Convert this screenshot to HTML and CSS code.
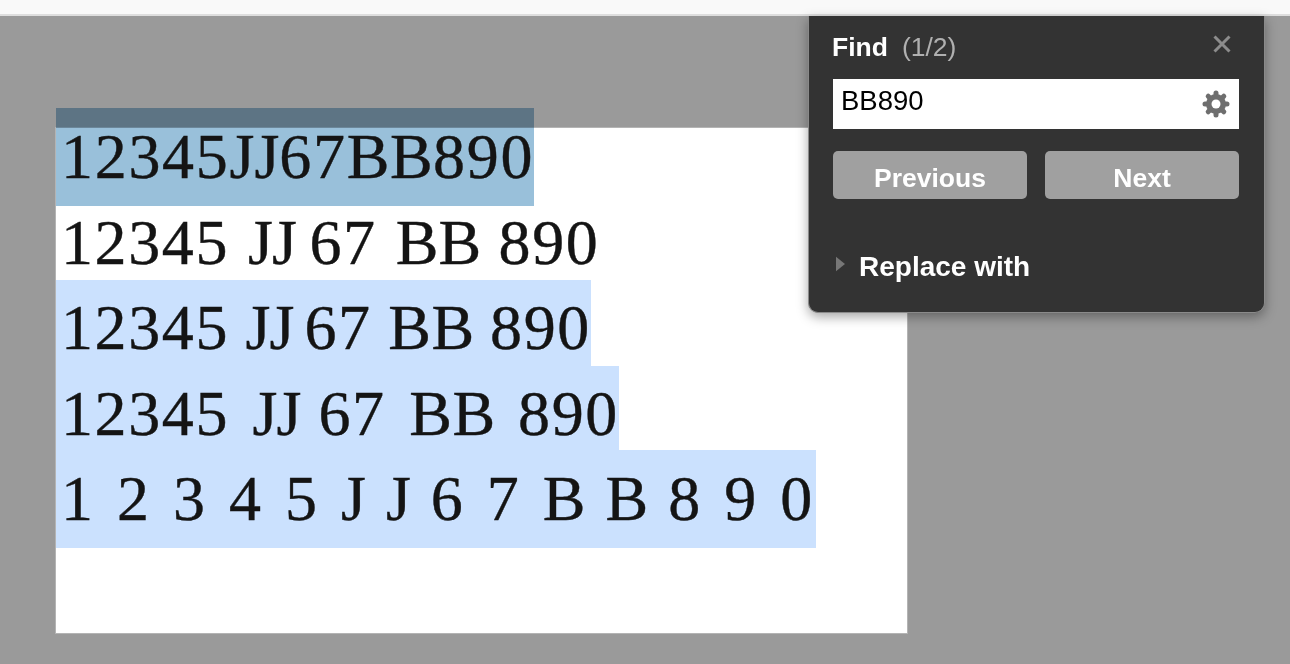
FILE: index.html
```html
<!DOCTYPE html>
<html>
<head>
	<meta charset="utf-8">
	<title>Find</title>
	<link rel="stylesheet" href="styles.css">
</head>
<body>
<div class="top_bar"></div>
<div class="viewer">
	<div class="page">
		<div class="line line_current"><span class="nums">12345</span><span class="jay">JJ</span><span class="nums">67</span><span class="bee">BB</span><span class="nums">890</span></div>
		<div class="line line_plain"><span class="nums">12345 </span><span class="jay">JJ </span><span class="nums">67 </span><span class="bee">BB </span><span class="nums">890</span></div>
		<div class="line line_three found"><span class="nums">12345 </span><span class="jay">JJ </span><span class="nums">67 </span><span class="bee">BB </span><span class="nums">890</span></div>
		<div class="line line_four found"><span class="nums">12345 </span><span class="jay">JJ </span><span class="nums">67 </span><span class="bee">BB </span><span class="nums">890</span></div>
		<div class="line line_five found"><span class="nums">12345</span><span class="jay">JJ</span><span class="nums">67</span><span class="bee">BB</span><span class="nums">890</span></div>
	</div>

	<div class="find_panel">
		<div class="find_header">
			<span class="find_title">Find</span>
			<span class="find_count">(1/2)</span>
			<svg class="close_icon" viewBox="0 0 18 18" aria-hidden="true"><path d="M1.5 1.5l15 15M16.5 1.5l-15 15"/></svg>
		</div>
		<div class="find_input">
			<span>BB890</span>
			<svg class="gear_icon" viewBox="0 0 28 28" aria-hidden="true">
				<g class="gear_teeth">
					<path d="M14 3v22M3 14h22M6.2 6.2l15.6 15.6M21.8 6.2L6.2 21.8"/>
				</g>
				<circle class="gear_body" cx="14" cy="14" r="10"/>
				<circle class="gear_hole" cx="14" cy="14" r="4.5"/>
			</svg>
		</div>
		<div class="find_buttons">
			<button class="find_button">Previous</button>
			<button class="find_button">Next</button>
		</div>
		<div class="replace_row">
			<svg class="replace_arrow" viewBox="0 0 10 16" aria-hidden="true"><path d="M0 0l10 8-10 8z"/></svg>
			<span>Replace with</span>
		</div>
	</div>
</div>
</body>
</html>
```

FILE: styles.css
```css
html {
	background: #9a9a9a;
}

body {
	margin: 0;
	height: 664px;
	overflow: hidden;
	display: flex;
	flex-direction: column;
	font-family: "Liberation Sans", Arial, sans-serif;
}

.top_bar {
	height: 14px;
	flex-shrink: 0;
	background: #f9f9f9;
	border-bottom: 2px solid #dedede;
}

.viewer {
	position: relative;
	flex: 1;
	padding: 111px 0 0 55px;
	background: #9a9a9a;
}

.page {
	width: 853px;
	height: 507px;
	box-sizing: border-box;
	background: white;
	border: 1px solid #b4b4b4;
	font-family: "Liberation Serif", "Times New Roman", serif;
	font-size: 64px;
	line-height: 64px;
	color: #141414;
	-webkit-text-stroke: 0.4px #141414;
}

.line {
	--gap: 0px;
	box-sizing: border-box;
	width: fit-content;
	padding-left: 5px;
	white-space: pre;
	word-spacing: var(--gap);
}

.found {
	background: #cbe1fe;
}

.nums {
	letter-spacing: 1.6px;
}

.jay {
	letter-spacing: -1px;
	word-spacing: calc(var(--gap) - 3px);
}

.bee {
	letter-spacing: 0.5px;
}

.line_current {
	margin-top: -20px;
	height: 98px;
	padding-top: 17px;
	background: #99c0da;
	mix-blend-mode: multiply;
}

.line_current .nums {
	letter-spacing: 1.7px;
}

.line_current .jay {
	letter-spacing: 0;
}

.line_plain {
	--gap: 1.5px;
	height: 74px;
	padding-top: 5px;
}

.line_plain .bee {
	letter-spacing: 0;
}

.line_three {
	--gap: -1px;
	height: 86px;
	padding-top: 16px;
}

.line_four {
	--gap: 6px;
	height: 84px;
	padding-top: 16px;
}

.line_five {
	width: 760px;
	height: 98px;
	padding-top: 17px;
}

.line_five .nums {
	letter-spacing: 24px;
}

.line_five .jay,
.line_five .bee {
	letter-spacing: 20px;
}

.find_panel {
	position: absolute;
	top: 0;
	left: 808px;
	width: 457px;
	height: 297px;
	box-sizing: border-box;
	padding: 0 25px 0 24px;
	background: #333;
	border: 1px solid #8a8a8a;
	border-top: 0;
	border-radius: 0 0 10px 10px;
	box-shadow: 0 4px 12px rgba(0, 0, 0, 0.35);
	color: white;
}

.find_header {
	height: 63px;
	display: flex;
	align-items: center;
	column-gap: 14px;
	font-size: 26.5px;
}

.find_title {
	margin-left: -1px;
	font-weight: bold;
}

.find_count {
	color: #b0b0b0;
}

.close_icon {
	width: 18px;
	height: 18px;
	margin-left: auto;
	margin-right: 8px;
	margin-bottom: 8px;
	fill: none;
	stroke: #8c8c8c;
	stroke-width: 3;
}

.find_input {
	height: 50px;
	box-sizing: border-box;
	padding: 0 9px 0 8px;
	display: flex;
	align-items: center;
	justify-content: space-between;
	background: white;
	color: black;
	font-size: 27.5px;
}

.find_input span {
	margin-bottom: 7px;
}

.gear_icon {
	width: 28px;
	height: 28px;
}

.gear_teeth {
	fill: none;
	stroke: #6e6e6e;
	stroke-width: 5;
	stroke-linecap: round;
}

.gear_body {
	fill: #6e6e6e;
}

.gear_hole {
	fill: white;
}

.find_buttons {
	display: flex;
	column-gap: 18px;
	margin-top: 22px;
}

.find_button {
	flex: 1;
	height: 48px;
	padding: 6px 0 0;
	border: 0;
	border-radius: 5px;
	background: #a0a0a0;
	color: white;
	font-family: inherit;
	font-weight: bold;
	font-size: 26.5px;
}

.replace_row {
	display: flex;
	align-items: center;
	column-gap: 14px;
	margin-top: 52px;
	margin-left: 3px;
	font-weight: bold;
	font-size: 28px;
}

.replace_arrow {
	width: 9px;
	height: 16px;
	margin-bottom: 6px;
	fill: #777;
}
```
